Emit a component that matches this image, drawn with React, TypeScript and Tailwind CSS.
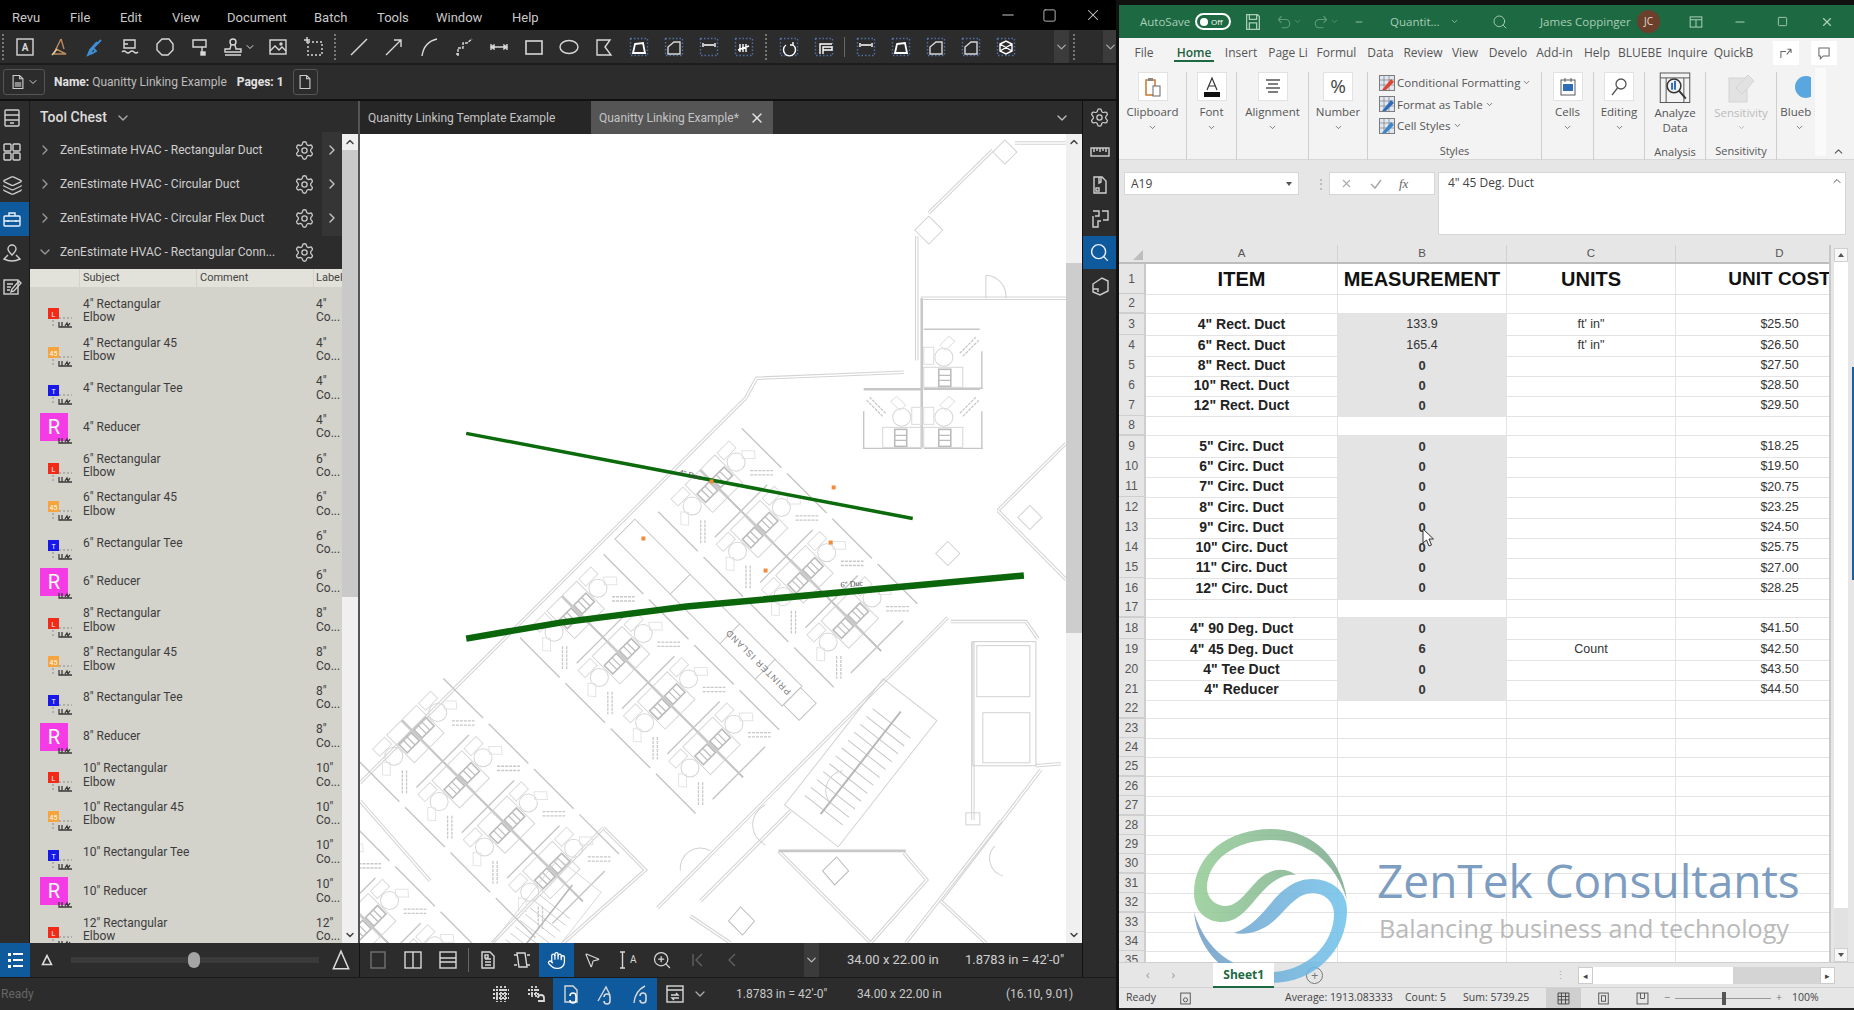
import type { ReactNode } from 'react'
import {
  ChevronDown, ChevronRight, ChevronUp, Hand, Layers, Minus, MousePointer2, Search, Settings, Square, X, ZoomIn,
} from 'lucide-react'

const MENUS = [
  ['Revu', 'w-[58px]'], ['File', 'w-[50px]'], ['Edit', 'w-[52px]'], ['View', 'w-[55px]'], ['Document', 'w-[87px]'],
  ['Batch', 'w-[63px]'], ['Tools', 'w-[59px]'], ['Window', 'w-[76px]'], ['Help', 'w-[40px]'],
]

function Ico({ children, size = 22, className = '' }: { children: ReactNode; size?: number; className?: string }) {
  return (
    <svg width={size} height={size} viewBox="0 0 22 22" fill="none" stroke="currentColor" strokeWidth="1.4" className={className}>
      {children}
    </svg>
  )
}

const Dash = () => <rect x="2.5" y="2.5" width="17" height="17" stroke="#4f6fa8" strokeDasharray="1.5 2" />

// toolbar glyphs, drawn by hand since the packages don't have these
const GLYPH: Record<string, ReactNode> = {
  text: <><rect x="3" y="3" width="16" height="16" /><text x="11" y="15" fontSize="10" fontWeight="700" textAnchor="middle" fill="currentColor" stroke="none" fontFamily="Roboto">A</text></>,
  pen: <><path d="M12 3 L7 13 M12 3 L15 13 M7 13 L17 18 L5 18 Z" stroke="#b98a5e" /><path d="M3 19 L8 13" stroke="#e8c9a8" /></>,
  hi: <path d="M17 4 L9 12 L6 18 L4 19 L6 14 L13 6 M9 12 L12 15 L7 18" stroke="#3f8fd6" strokeWidth="1.8" />,
  cloud: <><path d="M5 4 H16 V12 H5 Z M5 8 H9" /><path d="M3 16 q2 -2 4 0 t4 0 t4 0 t4 0" /></>,
  poly: <path d="M8 3 L15 3 L19 8 L19 14 L14 19 L8 19 L3 14 L3 8 Z" />,
  callout: <><path d="M4 4 H17 V11 H4 Z" /><path d="M13 11 V16" /><rect x="12" y="16" width="4" height="3" fill="currentColor" /></>,
  stamp: <><circle cx="11" cy="6" r="3" /><path d="M9 9 L8 13 H3 V16 H19 V13 H14 L13 9 M3 19 H19" /></>,
  image: <><rect x="3" y="4" width="16" height="14" /><path d="M3 15 L8 10 L12 14 L15 11 L19 15" /><circle cx="14" cy="8" r="1" /></>,
  crop: <><rect x="6" y="6" width="14" height="13" strokeDasharray="2 2" /><path d="M5 1 V7 M2 4 H8" /></>,
  line: <path d="M3 19 L19 3" />,
  arrow: <path d="M3 19 L18 4 M11 4 H18 V11" />,
  arc: <path d="M4 20 Q6 6 19 3" />,
  poly2: <path d="M5 20 V12 H10 V7 H14 L19 3 M3 18 H7" strokeDasharray="3 1" />,
  dim: <path d="M3 11 H19 M3 8 V14 M19 8 V14 M3 11 L6 9 V13 Z M19 11 L16 9 V13 Z" />,
  rect: <rect x="3" y="5" width="16" height="13" strokeWidth="1.6" />,
  ellipse: <ellipse cx="11" cy="11" rx="9" ry="6.5" />,
  sketch: <path d="M4 4 H17 L12 11 L18 19 H4 Z" />,
  len: <><Dash /><path d="M6 9 H16 M5 7 V11 M17 7 V11" stroke="#fff" /></>,
  area: <><Dash /><path d="M7 8 L15 7 L17 17 H5 Z" stroke="#fff" strokeWidth="1.8" /></>,
  peri: <><Dash /><path d="M5 18 V11 L11 6 H17 V18 Z" /></>,
  count: <><Dash /><path d="M7 8 V16 M10 8 V16 M13 8 V16 M5 14 L16 10" stroke="#fff" /></>,
  rot: <><Dash /><path d="M8 9 A6 6 0 1 0 15 9 M15 9 L15 6 M15 9 L12 9" stroke="#fff" /></>,
  pipe: <><Dash /><path d="M7 18 V8 H19 M10 18 V11 H19 V14 H10" stroke="#fff" /></>,
  vol: <><Dash /><path d="M5 8 L11 5 L17 8 V15 L11 18 L5 15 Z M5 8 L17 15 M17 8 L5 15" stroke="#fff" /></>,
  drawer: <><rect x="4" y="3" width="14" height="16" rx="1" /><path d="M4 8 H18 M4 13 H18 M9 16 H13" /></>,
  thumbs: <><rect x="3" y="3" width="7" height="7" rx="1" /><rect x="12" y="3" width="7" height="7" rx="1" /><rect x="3" y="12" width="7" height="7" rx="1" /><rect x="12" y="12" width="7" height="7" rx="1" /></>,
  chest: <><rect x="3" y="8" width="16" height="10" rx="1" /><path d="M8 8 V5 H14 V8 M3 13 H19 M7 12 V14 M15 12 V14" /></>,
  pin: <><path d="M11 13 C7 9 7 8 7 7 A4 4 0 0 1 15 7 C15 8 15 9 11 13 Z" /><path d="M7 13 L3 17 Q11 21 19 17 L15 13" /></>,
  form: <><rect x="3" y="5" width="14" height="14" /><path d="M6 9 H12 M6 12 H10 M6 15 H9 M18 6 L11 14 L10 17 L13 16 L20 8 Z" /></>,
  ruler: <><rect x="2" y="7" width="18" height="8" /><path d="M5 7 V11 M8 7 V10 M11 7 V11 M14 7 V10 M17 7 V11" /></>,
  doc: <><path d="M5 3 H13 L17 7 V19 H5 Z" /><path d="M10 3 V9 L12 8 V3" /><rect x="7" y="14" width="3" height="3" /></>,
  plan: <path d="M4 3 H10 V8 H6 M13 3 H19 V12 H14 M4 8 V19 H9 V13 H12" />,
  shape: <path d="M4 9 L13 3 L19 6 V16 L11 20 L4 17 Z M4 14 H9 V17" />,
  page: <><path d="M5 3 H13 L17 7 V19 H5 Z M13 3 V7 H17" /><rect x="7" y="11" width="8" height="6" fill="currentColor" stroke="none" opacity="0.6" /></>,
  single: <rect x="4" y="3" width="14" height="16" />,
  split: <><rect x="3" y="3" width="16" height="16" /><path d="M11 3 V19" /></>,
  splitH: <><rect x="3" y="3" width="16" height="16" /><path d="M3 9 H19 M3 13 H19" /></>,
  pageText: <><path d="M5 3 H13 L17 7 V19 H5 Z" /><path d="M8 10 H14 M8 13 H14 M8 16 H14" /><rect x="8" y="6" width="3" height="3" /></>,
  pageCrop: <><path d="M3 6 H6 M3 16 H6 M16 6 H19 M16 16 H19" /><path d="M6 4 H14 L16 18 H8 Z" /></>,
  textSel: <><path d="M4 3 H9 M4 19 H9 M6.5 3 V19" /><text x="14" y="14" fontSize="10" fill="currentColor" stroke="none" fontFamily="Roboto">A</text></>,
  first: <path d="M7 5 V17 M16 5 L10 11 L16 17" />,
  prev: <path d="M14 5 L8 11 L14 17" />,
  grid: <path d="M7 3 V19 M11 3 V19 M15 3 V19 M3 7 H19 M3 11 H19 M3 15 H19" strokeDasharray="2 1" strokeWidth="1.8" />,
  gridSnap: <><path d="M7 3 V15 M11 3 V15 M3 7 H15 M3 11 H15" strokeDasharray="2 1" strokeWidth="1.8" /><path d="M13 15 a3 3 0 0 1 6 0 v3 h-6" strokeWidth="1.8" /></>,
  snapDoc: <><path d="M5 3 H13 L17 7 V19 H5 Z" /><path d="M10 13 a3 3 0 0 1 6 0 v4 a3 3 0 0 1 -6 0" stroke="#fff" strokeWidth="1.6" /></>,
  snapMark: <><path d="M3 18 L11 4 L15 12" /><path d="M9 14 a3 3 0 0 1 6 0 v4 a3 3 0 0 1 -6 0" strokeWidth="1.6" /></>,
  snapLine: <><path d="M5 20 Q6 8 16 3" /><path d="M11 13 a3 3 0 0 1 6 0 v4 a3 3 0 0 1 -6 0" strokeWidth="1.6" /></>,
  sync: <><rect x="3" y="3" width="16" height="16" /><path d="M3 7 H19 M7 12 H14 L12 10 M15 15 H8 L10 17" /></>,
}

function ToolBtn({ name, className = 'w-[35px]' }: { name: string; className?: string }) {
  return (
    <div className={`${className} h-full flex items-center justify-center text-[#d8d8d8] shrink-0`}>
      <Ico>{GLYPH[name]}</Ico>
    </div>
  )
}

const Dotted = ({ className = '' }: { className?: string }) => (
  <div className={`h-[26px] border-l-2 border-dotted border-[#777] shrink-0 ${className}`} />
)

function MainToolbar() {
  const first = ['pen', 'hi', 'cloud', 'poly', 'callout']
  const second = ['line', 'arrow', 'arc', 'poly2', 'dim', 'rect', 'ellipse', 'sketch', 'area', 'peri', 'len', 'count']
  const fourth = ['len', 'area', 'peri', 'peri', 'vol']
  return (
    <div className="h-[33px] bg-[#2c2c2c] flex items-center shrink-0">
      <Dotted className="ml-[2px] mr-[3px]" />
      <ToolBtn name="text" />
      {first.map((n, i) => <ToolBtn key={i} name={n} />)}
      <div className="w-[43px] h-full flex items-center justify-center text-[#d8d8d8] shrink-0">
        <Ico>{GLYPH.stamp}</Ico>
        <ChevronDown className="w-3 h-3" />
      </div>
      <ToolBtn name="image" />
      <ToolBtn name="crop" />
      <Dotted className="ml-[4px] mr-[5px]" />
      {second.map((n, i) => <ToolBtn key={i} name={n} />)}
      <Dotted className="ml-[4px] mr-[4px]" />
      <ToolBtn name="rot" />
      <ToolBtn name="pipe" />
      <div className="h-[20px] border-l border-[#666] mx-[3px] shrink-0" />
      {fourth.map((n, i) => <ToolBtn key={i} name={n} />)}
      <div className="ml-[31px] w-[15px] h-full bg-[#3b3b3b] flex items-center justify-center shrink-0">
        <ChevronDown className="w-4 h-4 text-[#aaa]" />
      </div>
      <Dotted className="ml-[4px]" />
      <div className="ml-[28px] w-[15px] h-full bg-[#3b3b3b] flex items-center justify-center shrink-0">
        <ChevronDown className="w-4 h-4 text-[#aaa]" />
      </div>
    </div>
  )
}

const CHESTS = [
  'ZenEstimate HVAC - Rectangular Duct',
  'ZenEstimate HVAC - Circular Duct',
  'ZenEstimate HVAC - Circular Flex Duct',
  'ZenEstimate HVAC - Rectangular Conn...',
]

type RowKind = 'elbow' | 'elbow45' | 'tee' | 'reducer'

const SIZES = ['4"', '6"', '8"', '10"', '12"']
const KINDS: [RowKind, string][] = [
  ['elbow', 'Rectangular\nElbow'],
  ['elbow45', 'Rectangular 45\nElbow'],
  ['tee', 'Rectangular Tee'],
  ['reducer', 'Reducer'],
]
const CHEST_ROWS = SIZES.flatMap(s =>
  KINDS.map(([kind, label]) => ({ size: s, kind, label: `${s} ${label}` }))
).slice(0, 17)

function RowIcon({ kind }: { kind: RowKind }) {
  const fill = kind === 'elbow' ? '#f32a17' : kind === 'elbow45' ? '#f8a43c' : '#1818ea'
  const letter = kind === 'elbow' ? 'L' : kind === 'tee' ? 'T' : '45'
  return (
    <svg width="34" height="38" viewBox="0 0 34 38" className="block">
      {kind === 'reducer' ? (
        <>
          <rect x="0" y="5" width="28" height="28" fill="#f53be6" />
          <text x="14" y="26" fontSize="20" fill="#fff" textAnchor="middle" fontFamily="Roboto">R</text>
        </>
      ) : (
        <>
          <rect x="8" y="16" width="11" height="11" fill={fill} />
          <text x="13.5" y="24.5" fontSize="7" fill="#fff" textAnchor="middle" fontFamily="Roboto">{letter}</text>
          <path d="M19 26 H32 M13 28 V36" stroke="#8a8a8a" strokeDasharray="2 2" fill="none" />
        </>
      )}
      <path d="M19 30 V35 H32 M22 30 V35 M25 34 L27 31 L28 34 L30 31" stroke="#3a3a3a" strokeWidth="1.3" fill="none" />
    </svg>
  )
}

function ToolChest() {
  return (
    <div className="w-[312px] bg-[#2c2c2c] flex flex-col shrink-0 overflow-hidden">
      <div className="h-[33px] flex items-center gap-2 pl-[10px] text-[14px] font-medium text-[#dedede] shrink-0">
        Tool Chest <ChevronDown className="w-4 h-4 text-[#aaa]" />
      </div>
      {CHESTS.map((name, i) => (
        <div key={name} className="h-[36px] -mt-[2px] first:mt-0 flex items-center shrink-0 relative">
          <div className="w-[30px] flex justify-center text-[#999]">
            {i === 3 ? <ChevronDown className="w-4 h-4" /> : <ChevronRight className="w-4 h-4" />}
          </div>
          <span className="text-[12px] text-[#cfcfcf] w-[234px] truncate">{name}</span>
          <Settings className="w-[21px] h-[21px] text-[#c9c9c9]" strokeWidth={1.5} />
          {i < 3 && (
            <div className="absolute right-0 top-0 h-full w-[20px] bg-[#353535] flex items-center justify-center text-[#c5c5c5]">
              <ChevronRight className="w-4 h-4" />
            </div>
          )}
        </div>
      ))}
      <div className="flex-1 min-h-0 bg-[#d3d2cb] overflow-hidden -mt-[1px]">
        <div className="h-[18px] bg-[#e2e1da] grid grid-cols-[50px_117px_117px_28px] text-[11px] text-[#444] leading-[18px]">
          <span className="border-r border-[#d3d2cb]" />
          <span className="pl-[3px] border-r border-[#d3d2cb]">Subject</span>
          <span className="pl-[3px] border-r border-[#d3d2cb]">Comment</span>
          <span className="pl-[2px] overflow-hidden">Label</span>
        </div>
        <div className="pt-[5px]">
          {CHEST_ROWS.map(row => (
            <div key={row.label} className="h-[38.7px] grid grid-cols-[50px_117px_117px_28px] items-center text-[12px] leading-[13.5px] text-[#3c3c3c]">
              <div className="pl-[10px] self-start"><RowIcon kind={row.kind} /></div>
              <div className="pl-[3px] whitespace-pre">{row.label}</div>
              <div />
              <div className="pl-[2px] overflow-hidden whitespace-nowrap">{row.size}<br />Co...</div>
            </div>
          ))}
        </div>
      </div>
    </div>
  )
}

const LEFT_RAIL = ['drawer', 'thumbs', 'layers', 'chest', 'pin', 'form']
const RIGHT_RAIL = ['gear', 'ruler', 'doc', 'plan', 'search', 'shape']

function RailItem({ name, active, inset }: { name: string; active?: boolean; inset?: boolean }) {
  return (
    <div className={`h-[33.7px] flex items-center justify-center text-[#cfcfcf] ${inset ? 'pr-[5px]' : ''} ${active ? 'bg-[#0f5a9c] text-[#e8f1fb]' : ''}`}>
      {name === 'layers' ? <Layers className="w-[21px] h-[21px]" strokeWidth={1.4} />
        : name === 'gear' ? <Settings className="w-[21px] h-[21px]" strokeWidth={1.4} />
        : name === 'search' ? <Search className="w-[21px] h-[21px]" strokeWidth={1.6} />
        : <Ico>{GLYPH[name]}</Ico>}
    </div>
  )
}

const Cube = ({ t }: { t: string }) => (
  <g transform={t}>
    <path d="M0 0 H56 M58 22 V59 M0 59 H59" strokeWidth="1.4" stroke="#c6c6c6" />
    <circle cx="20" cy="28" r="9" stroke="#d6d6d6" />
    <rect x="0" y="38" width="39" height="20" stroke="#d6d6d6" />
    <rect x="15" y="40" width="12" height="17" stroke="#bcbcbc" strokeWidth="1.6" />
    <path d="M15 46 H27 M15 51 H27" stroke="#bcbcbc" strokeWidth="1.2" />
    <rect x="0" y="18" width="10" height="17" stroke="#dcdcdc" />
    <path d="M16 16 L25 7 L31 12 L22 21 Z" stroke="#e4e4e4" />
    <path d="M36 24 L52 8 M39 27 L55 11" strokeDasharray="3 1" stroke="#c8c8c8" strokeWidth="1.3" />
  </g>
)

function Pod({ x, y, n = 4 }: { x: number; y: number; n?: number }) {
  const cells = Array.from({ length: n }, (_, i) => i * 64 - (n * 64) / 2)
  return (
    <g transform={`translate(${x} ${y}) rotate(45)`}>
      <path d={`M${cells[0]} 0 H${-cells[0]}`} stroke="#bcbcbc" strokeWidth="1.8" />
      {cells.map(c => (
        <g key={c}>
          <Cube t={`translate(${c} -59)`} />
          <Cube t={`translate(${c} 59) scale(1 -1)`} />
        </g>
      ))}
    </g>
  )
}

const Stairs = ({ t, n = 12 }: { t: string; n?: number }) => (
  <g transform={t}>
    <rect x="-80" y="-34" width="160" height="68" />
    {Array.from({ length: n }, (_, i) => (
      <path key={i} d={`M${-60 + i * 10} -24 V24`} stroke="#c6c6c6" />
    ))}
    <path d="M-65 0 H65" stroke="#b8b8b8" strokeWidth="2" />
  </g>
)

const WALLS = [
  'M360 782 L745 398', 'M745 398 L756 378 L903 372',
  'M916 236 V360', 'M928 213 L992 150', 'M1014 143 H1065', 'M920 298 H1065',
  'M997 510 L1065 443', 'M997 510 L1065 579',
  'M947 617 L657 907', 'M950 621 H1025 L1037 638', 'M1040 769 L940 900',
  'M778 850 L870 942', 'M903 852 L926 879 L870 942',
  'M603 827 L645 869 L563 942', 'M603 827 L492 942', 'M360 800 L430 880',
  'M972 641 V819', 'M1000 820 L905 942', 'M1035 765 L1060 763',
  'M700 900 L790 810', 'M690 915 L730 942', 'M940 900 L985 942',
]

function FloorPlan() {
  return (
    <svg viewBox="360 134 705 808" className="w-full h-full block" fill="none" stroke="#d2d2d2" strokeWidth="1">
      {WALLS.map(d => (
        <g key={d}>
          <path d={d} strokeWidth="3.5" stroke="#d4d4d4" />
          <path d={d} strokeWidth="1.4" stroke="#fff" />
        </g>
      ))}
      <path d="M921 298 V447 M921 389 H863 M778 850 H905" stroke="#c8c8c8" strokeWidth="2.6" />
      <path d="M985 275 V298 M985 275 A21 21 0 0 1 1005 298" />
      <path d="M914 230 l14 -14 l14 14 l-14 14 Z M992 152 l12 -12 l12 12 l-12 12 Z M1029 505 l12 12 l-12 12 l-12 -12 Z M947 541 l12 12 l-12 12 l-12 -12 Z" />
      <Cube t="translate(923 329)" />
      <Cube t="translate(923 389)" />
      <Cube t="translate(921 389) scale(-1 1)" />
      <Pod x={790} y={560} />
      <Pod x={652} y={686} />
      <Pod x={492} y={810} />
      <Pod x={376} y={930} n={3} />
      <g transform="translate(708 612) rotate(45)">
        <rect x="-118" y="-14" width="236" height="28" stroke="#c4c4c4" fill="#fff" />
        <path d="M-40 -14 V14 M30 -14 V14 M80 -14 V14" stroke="#c4c4c4" />
        <rect x="118" y="-12" width="22" height="24" stroke="#c4c4c4" />
        <text x="70" y="3" transform="rotate(180 70 0)" fontSize="9" fill="#7a7a7a" stroke="none" textAnchor="middle" letterSpacing="1" fontFamily="Liberation Sans">PRINTER ISLAND</text>
      </g>
      <rect x="976" y="645" width="53" height="51" />
      <rect x="982" y="712" width="47" height="50" />
      <rect x="972" y="641" width="63" height="124" stroke="#cdcdcd" />
      <rect x="965" y="812" width="14" height="12" />
      <Stairs t="translate(860 762) rotate(-52)" />
      <Stairs t="translate(540 925) rotate(-52) scale(0.8)" n={10} />
      <path d="M765 844 a22 22 0 0 1 0 -40 M828 800 a20 20 0 0 1 14 -30 M680 870 a20 20 0 0 1 30 -20 M1002 875 a18 18 0 0 1 -8 -30" />
      <path d="M728 920 l12 -14 l14 14 l-12 14 Z M822 870 l14 -14 l12 14 l-14 14 Z" stroke="#bdbdbd" />

      <path d="M466 433 L912 518" stroke="#0b6a0b" strokeWidth="3.5" />
      <path d="M466 638 L560 622 L686 606 L1023 575" stroke="#0b650b" strokeWidth="6.5" />
      <text x="678" y="474" fontSize="8" fill="#444" stroke="none" fontFamily="Liberation Serif" transform="rotate(14 678 474)">4" Duc</text>
      <text x="840" y="587" fontSize="8" fill="#444" stroke="none" fontFamily="Liberation Serif" transform="rotate(-5 840 587)">6" Duc</text>
      {[[711, 481], [833, 487], [643, 538], [830, 542], [765, 570]].map(([x, y]) => (
        <rect key={x} x={x - 2} y={y - 2} width="4" height="4" fill="#f28b3c" stroke="none" />
      ))}
    </svg>
  )
}

function CanvasColumn() {
  return (
    <div className="flex-1 min-w-0 flex flex-col">
      <div className="h-[33px] flex text-[12px] text-[#c4c4c4] bg-[#2c2c2c] shrink-0">
        <div className="w-[231px] pl-[8px] flex items-center bg-[#262626]">Quanitty Linking Template Example</div>
        <div className="w-[182px] pl-[8px] flex items-center justify-between pr-[8px] bg-[#555]">
          Quanitty Linking Example*
          <X className="w-4 h-4 text-[#e6e6e6]" />
        </div>
        <div className="flex-1 flex items-center justify-end pr-[12px]"><ChevronDown className="w-4 h-4 text-[#bbb]" /></div>
      </div>
      <div className="flex-1 min-h-0 flex">
        <div className="flex-1 min-w-0 bg-white overflow-hidden"><FloorPlan /></div>
        <div className="w-[16px] flex flex-col bg-[#f0f0f0] shrink-0">
          <div className="h-[16px] flex items-center justify-center"><ChevronUp className="w-3 h-3 text-[#444]" strokeWidth={3} /></div>
          <div className="h-[113px]" />
          <div className="h-[370px] bg-[#cdcdcd]" />
          <div className="flex-1" />
          <div className="h-[16px] flex items-center justify-center"><ChevronDown className="w-3 h-3 text-[#444]" strokeWidth={3} /></div>
        </div>
      </div>
    </div>
  )
}

function BottomBar() {
  return (
    <div className="h-[34px] bg-[#2c2c2c] flex items-center shrink-0 text-[13px] text-[#cfcfcf]">
      <div className="w-[30px] h-full bg-[#0f5a9c] flex flex-col items-center justify-center gap-[3px]">
        {[0, 1, 2].map(i => (
          <div key={i} className="flex gap-[2px] items-center">
            <div className="w-[3px] h-[3px] bg-white" /><div className="w-[10px] h-[2px] bg-white" />
          </div>
        ))}
      </div>
      <div className="w-[330px] h-full flex items-center border-r border-[#111] shrink-0">
        <Ico size={14} className="ml-[10px] text-[#ddd] shrink-0"><path d="M11 4 L18 18 H4 Z" strokeWidth="2.5" /></Ico>
        <div className="ml-[17px] w-[248px] h-[6px] bg-[#3a3a3a] relative shrink-0">
          <div className="absolute left-[117px] -top-[5px] w-[12px] h-[16px] rounded-full bg-[#a5a5a5]" />
        </div>
        <Ico size={24} className="ml-[10px] text-[#ddd] shrink-0"><path d="M11 3 L18 19 H4 Z" /></Ico>
      </div>
      <ToolBtn name="single" className="w-[35px] opacity-40" />
      <ToolBtn name="split" />
      <ToolBtn name="splitH" />
      <div className="h-[24px] border-l border-[#666] mx-[3px] shrink-0" />
      <ToolBtn name="pageText" className="w-[32px]" />
      <ToolBtn name="pageCrop" />
      <div className="w-[35px] h-full bg-[#0f5a9c] flex items-center justify-center text-white shrink-0">
        <Hand className="w-[19px] h-[19px]" strokeWidth={1.6} />
      </div>
      <div className="w-[35px] flex justify-center text-[#d8d8d8]"><MousePointer2 className="w-[18px] h-[18px]" strokeWidth={1.5} /></div>
      <ToolBtn name="textSel" />
      <div className="w-[35px] flex justify-center text-[#d8d8d8]"><ZoomIn className="w-[20px] h-[20px]" strokeWidth={1.5} /></div>
      <ToolBtn name="first" className="w-[35px] opacity-30" />
      <ToolBtn name="prev" className="w-[35px] opacity-30" />
      <div className="ml-[55px] w-[15px] h-full bg-[#3b3b3b] flex items-center justify-center shrink-0">
        <ChevronDown className="w-4 h-4 text-[#bbb]" />
      </div>
      <span className="ml-[28px] w-[118px] shrink-0">34.00 x 22.00 in</span>
      <span className="shrink-0">1.8783 in = 42'-0"</span>
    </div>
  )
}

function StatusBar() {
  return (
    <div className="h-[33px] bg-[#2c2c2c] flex items-center shrink-0 text-[12px] text-[#c8c8c8] border-t border-[#1a1a1a]">
      <span className="w-[483px] text-[#666] shrink-0 pl-[1px]">Ready</span>
      <ToolBtn name="grid" />
      <ToolBtn name="gridSnap" />
      <div className="h-full bg-[#0f5a9c] flex items-center shrink-0">
        <ToolBtn name="snapDoc" className="w-[35px]" />
        <ToolBtn name="snapMark" className="w-[35px]" />
        <ToolBtn name="snapLine" className="w-[34px]" />
      </div>
      <ToolBtn name="sync" />
      <ChevronDown className="w-4 h-4 text-[#aaa] shrink-0" />
      <span className="ml-[28px] w-[121px] shrink-0">1.8783 in = 42'-0"</span>
      <span className="w-[149px] shrink-0">34.00 x 22.00 in</span>
      <span className="shrink-0">(16.10, 9.01)</span>
    </div>
  )
}

function RevuWindow() {
  return (
    <div className="w-[1116px] h-full flex flex-col shrink-0 font-[Roboto,sans-serif]">
      <div className="h-[30px] bg-black flex items-center pl-[12px] text-[13px] text-[#c9c9c9] shrink-0">
        {MENUS.map(([label, width]) => <span key={label} className={`${width} pt-[6px]`}>{label}</span>)}
        <div className="ml-auto flex items-center text-[#c9c9c9]">
          <Minus className="w-[18px] h-[18px] mr-[25px]" strokeWidth={1.4} />
          <Square className="w-[15px] h-[15px] mr-[27px]" strokeWidth={1.4} />
          <X className="w-[18px] h-[18px] mr-[14px]" strokeWidth={1.4} />
        </div>
      </div>
      <MainToolbar />
      <div className="h-[2px] bg-[#1c1c1c] shrink-0" />
      <div className="h-[34px] bg-[#2c2c2c] flex items-center text-[12px] text-[#bdbdbd] shrink-0">
        <div className="ml-[3px] w-[42px] h-[26px] border border-[#555] rounded-[3px] flex items-center justify-center text-[#ccc]">
          <Ico size={18}>{GLYPH.page}</Ico><ChevronDown className="w-3 h-3" />
        </div>
        <span className="ml-[9px]"><span className="font-bold text-[#e2e2e2]">Name:</span> Quanitty Linking Example</span>
        <span className="ml-[10px] font-bold text-[#e2e2e2]">Pages: 1</span>
        <div className="ml-[9px] w-[25px] h-[26px] border border-[#555] rounded-[3px] flex items-center justify-center text-[#ccc]">
          <Ico size={18}><path d="M5 3 H13 L17 7 V19 H5 Z M13 3 V7 H17" /></Ico>
        </div>
      </div>
      <div className="h-[2px] bg-[#111] shrink-0" />
      <div className="flex-1 min-h-0 flex">
        <div className="flex-1 min-w-0 flex flex-col">
          <div className="flex-1 min-h-0 flex">
            <div className="w-[30px] pt-0 bg-[#2c2c2c] shrink-0 border-r border-[#1a1a1a]">
              {LEFT_RAIL.map(n => <RailItem key={n} name={n} active={n === 'chest'} inset />)}
            </div>
            <ToolChest />
            <div className="w-[16px] bg-[#f0f0f0] flex flex-col shrink-0">
              <div className="h-[33px] bg-[#2c2c2c]" />
              <div className="h-[16px] bg-[#efefef] flex items-center justify-center"><ChevronUp className="w-3 h-3 text-[#444]" strokeWidth={3} /></div>
              <div className="h-[447px] bg-[#c9c9c9]" />
              <div className="flex-1" />
              <div className="h-[16px] flex items-center justify-center"><ChevronDown className="w-3 h-3 text-[#444]" strokeWidth={3} /></div>
            </div>
            <div className="w-[2px] bg-[#555] shrink-0" />
            <CanvasColumn />
          </div>
          <BottomBar />
        </div>
        <div className="w-[34px] bg-[#2c2c2c] shrink-0 border-l border-[#111]">
          {RIGHT_RAIL.map(n => <RailItem key={n} name={n} active={n === 'search'} />)}
        </div>
      </div>
      <StatusBar />
    </div>
  )
}

const RIBBON_TABS = [
  ['File', 'w-[50px]'], ['Home', 'w-[50px]'], ['Insert', 'w-[44px]'], ['Page Li', 'w-[50px]'], ['Formul', 'w-[47px]'],
  ['Data', 'w-[41px]'], ['Review', 'w-[44px]'], ['View', 'w-[40px]'], ['Develo', 'w-[46px]'], ['Add-in', 'w-[47px]'],
  ['Help', 'w-[38px]'], ['BLUEBE', 'w-[48px]'], ['Inquire', 'w-[47px]'], ['QuickB', 'w-[45px]'],
]

function RibbonBtn({ label, children, width, dim }: { label: string; children: ReactNode; width: string; dim?: boolean }) {
  return (
    <div className={`${width} h-[88px] border-r border-[#cfcfcf] flex flex-col items-center shrink-0 ${dim ? 'opacity-40' : ''}`}>
      <div className="w-[30px] h-[29px] bg-white border border-[#e2e2e2] flex items-center justify-center text-[#444]">{children}</div>
      <span className="mt-[3px] leading-[16px]">{label}</span>
      <ChevronDown className="w-[9px] h-[9px] mt-[3px] text-[#555]" />
    </div>
  )
}

const StyleIcon = ({ color }: { color: string }) => (
  <svg width="16" height="16" viewBox="0 0 16 16" className="shrink-0">
    <rect x="0.5" y="0.5" width="15" height="15" fill="#dfe8f2" stroke="#7d7d7d" />
    <path d="M0 5 H16 M0 10 H16 M5 0 V16 M10 0 V16" stroke="#7d7d7d" strokeWidth="0.7" />
    <path d="M3 15 L12 4 L15 7 L7 15 Z" fill={color} />
  </svg>
)

function Ribbon() {
  return (
    <div className="h-[92px] bg-[#f3f3f3] flex pt-[4px] text-[11.5px] text-[#555] shrink-0 border-b border-[#d8d8d8] relative">
      <RibbonBtn label="Clipboard" width="w-[68px]">
        <svg width="18" height="22" viewBox="0 0 18 22" fill="none"><rect x="2" y="4" width="9" height="15" stroke="#c9772d" strokeWidth="1.5" /><rect x="9" y="10" width="7" height="10" stroke="#666" fill="#fff" /><rect x="4" y="2" width="5" height="3" fill="#888" /></svg>
      </RibbonBtn>
      <RibbonBtn label="Font" width="w-[50px]">
        <svg width="18" height="22" viewBox="0 0 18 22" fill="none"><path d="M4 14 L9 2 L14 14 M6 10 H12" stroke="#333" strokeWidth="1.2" /><rect x="1" y="16" width="16" height="5" fill="#111" /></svg>
      </RibbonBtn>
      <RibbonBtn label="Alignment" width="w-[72px]">
        <svg width="18" height="18" viewBox="0 0 18 18" stroke="#555" strokeWidth="1.4"><path d="M2 2 H16 M4 6 H14 M2 10 H16 M4 14 H14" /></svg>
      </RibbonBtn>
      <RibbonBtn label="Number" width="w-[59px]">
        <span className="text-[19px] text-[#444]">%</span>
      </RibbonBtn>
      <div className="w-[174px] h-[88px] border-r border-[#cfcfcf] pl-[11px] flex flex-col shrink-0 relative">
        <div className="h-[22px] flex items-center gap-[2px]"><StyleIcon color="#e0452f" /> Conditional Formatting <ChevronDown className="w-[9px] h-[9px]" /></div>
        <div className="h-[23px] flex items-center gap-[2px]"><StyleIcon color="#2f6db8" /> Format as Table <ChevronDown className="w-[9px] h-[9px]" /></div>
        <div className="h-[22px] flex items-center gap-[2px]"><StyleIcon color="#3a86c8" /> Cell Styles <ChevronDown className="w-[9px] h-[9px]" /></div>
        <span className="mt-[7px] text-center pr-[11px] text-[11px]">Styles</span>
      </div>
      <RibbonBtn label="Cells" width="w-[52px]">
        <svg width="18" height="20" viewBox="0 0 18 20" fill="none"><rect x="2" y="3" width="14" height="15" stroke="#5b5b5b" /><rect x="4" y="7" width="10" height="7" fill="#2f6db8" /><path d="M6 1 V5 M12 1 V5" stroke="#5b5b5b" /></svg>
      </RibbonBtn>
      <RibbonBtn label="Editing" width="w-[51px]">
        <svg width="20" height="20" viewBox="0 0 20 20" fill="none" stroke="#555" strokeWidth="1.3"><circle cx="12" cy="7" r="5" /><path d="M8.5 11 L3 18" /></svg>
      </RibbonBtn>
      <div className="w-[61px] h-[88px] border-r border-[#cfcfcf] flex flex-col items-center shrink-0">
        <svg width="32" height="32" viewBox="0 0 32 32" fill="none" stroke="#555"><rect x="1" y="1" width="30" height="30" /><path d="M1 6 H31 M7 6 V31 M25 6 V31" /><circle cx="15" cy="14" r="7" stroke="#333" strokeWidth="1.5" /><rect x="12" y="11" width="2" height="7" fill="#2f6db8" stroke="none" /><rect x="15" y="9" width="2" height="9" fill="#2f6db8" stroke="none" /><path d="M20 19 L27 27" stroke="#333" strokeWidth="2" /></svg>
        <span className="leading-[15px] text-center mt-[1px]">Analyze<br />Data</span>
        <span className="mt-[9px] text-[11px]">Analysis</span>
      </div>
      <div className="w-[71px] h-[88px] border-r border-[#cfcfcf] flex flex-col items-center shrink-0">
        <svg width="30" height="32" viewBox="0 0 30 32" fill="#e2e2e2" stroke="#d4d4d4"><rect x="3" y="6" width="18" height="24" /><path d="M10 16 L22 3 L28 9 L16 22 Z" /></svg>
        <span className="leading-[15px] mt-[1px] text-[#bbb]">Sensitivity</span>
        <ChevronDown className="w-[9px] h-[9px] mt-[3px] text-[#aaa]" />
        <span className="mt-[11px] text-[11px]">Sensitivity</span>
      </div>
      <div className="w-[40px] flex flex-col items-center shrink-0 pl-[4px] overflow-hidden">
        <div className="w-[24px] h-[29px] flex items-center overflow-hidden"><div className="w-[22px] h-[22px] rounded-full bg-[#5aa7e0] ml-[8px] shrink-0" /></div>
        <span className="mt-[3px] leading-[16px] whitespace-nowrap">Blueb ›</span>
        <ChevronDown className="w-[9px] h-[9px] mt-[3px]" />
      </div>
      <div className="w-[11px] h-[88px] bg-[#fafafa] shrink-0 -mt-[4px] ml-[-2px]" />
      <ChevronUp className="absolute right-[9px] bottom-[1px] w-[13px] h-[13px]" />
    </div>
  )
}

const ROWS: Record<number, [string, string, string, string]> = {
  3: ['4" Rect. Duct', '133.9', `ft' in"`, '$25.50'],
  4: ['6" Rect. Duct', '165.4', `ft' in"`, '$26.50'],
  5: ['8" Rect. Duct', '0', '', '$27.50'],
  6: ['10" Rect. Duct', '0', '', '$28.50'],
  7: ['12" Rect. Duct', '0', '', '$29.50'],
  9: ['5" Circ. Duct', '0', '', '$18.25'],
  10: ['6" Circ. Duct', '0', '', '$19.50'],
  11: ['7" Circ. Duct', '0', '', '$20.75'],
  12: ['8" Circ. Duct', '0', '', '$23.25'],
  13: ['9" Circ. Duct', '0', '', '$24.50'],
  14: ['10" Circ. Duct', '0', '', '$25.75'],
  15: ['11" Circ. Duct', '0', '', '$27.00'],
  16: ['12" Circ. Duct', '0', '', '$28.25'],
  18: ['4" 90 Deg. Duct', '0', '', '$41.50'],
  19: ['4" 45 Deg. Duct', '6', 'Count', '$42.50'],
  20: ['4" Tee Duct', '0', '', '$43.50'],
  21: ['4" Reducer', '0', '', '$44.50'],
}

const GRID_COLS = 'grid grid-cols-[27px_192px_169px_169px_208px]'
const CELL = 'border-r border-b border-[#e3e3e3] flex items-center justify-center'

function Sheet() {
  const numbers = Array.from({ length: 34 }, (_, i) => i + 2)
  return (
    <div className="flex-1 min-h-0 flex bg-[#e6e6e6]">
      <div className="w-[712px] overflow-hidden border-r-2 border-[#c8c8c8] font-['Liberation_Sans',sans-serif]">
        <div className={`${GRID_COLS} h-[19px] text-[11.5px] text-[#555] border-b-2 border-[#bdbdbd]`}>
          <div className="flex items-end justify-end pr-[3px] pb-[2px]">
            <div className="w-0 h-0 border-l-[10px] border-l-transparent border-b-[10px] border-b-[#bdbdbd]" />
          </div>
          {['A', 'B', 'C', 'D'].map(c => (
            <div key={c} className="flex items-center justify-center border-r border-[#d2d2d2]">{c}</div>
          ))}
        </div>
        <div className={`${GRID_COLS} h-[30px] bg-white text-[20px] font-bold text-[#111]`}>
          <div className="bg-[#e6e6e6] text-[12px] font-normal text-[#555] flex items-center justify-center border-r-2 border-b-2 border-[#c8c8c8]">1</div>
          {['ITEM', 'MEASUREMENT', 'UNITS'].map(h => (
            <div key={h} className={`${CELL} whitespace-nowrap`}>{h}</div>
          ))}
          <div className={`${CELL} whitespace-nowrap text-[19px]`}>UNIT COST</div>
        </div>
        {numbers.map(n => {
          const row = ROWS[n]
          return (
            <div key={n} className={`${GRID_COLS} ${n < 22 ? 'h-[20.28px]' : 'h-[19.4px]'} bg-white text-[#333] text-[12.5px]`}>
              <div className="bg-[#e6e6e6] text-[12px] text-[#555] flex items-center justify-center border-r-2 border-b-2 border-[#cfcfcf]">{n}</div>
              <div className={`${CELL} font-bold text-[14px] text-[#222]`}>{row?.[0]}</div>
              <div className={`${CELL} ${row ? 'bg-[#e4e4e4] border-[#e4e4e4]' : ''} ${row?.[1] === '0' || row?.[1] === '6' ? 'font-bold text-[13px]' : ''}`}>{row?.[1]}</div>
              <div className={CELL}>{row?.[2]}</div>
              <div className={CELL}>{row?.[3]}</div>
            </div>
          )
        })}
      </div>
      <div className="w-[3px] shrink-0" />
      <div className="w-[14px] bg-white flex flex-col shrink-0 mt-[3px] relative">
        <div className="h-[14px] bg-[#f7f7f7] border border-[#d0d0d0] flex items-center justify-center">
          <div className="w-0 h-0 border-l-[3px] border-l-transparent border-r-[3px] border-r-transparent border-b-[4px] border-b-[#555]" />
        </div>
        <div className="flex-1" />
        <div className="h-[40px] bg-[#e2e2e2]" />
        <div className="h-[14px] bg-[#f7f7f7] border border-[#d0d0d0] flex items-center justify-center">
          <div className="w-0 h-0 border-l-[3px] border-l-transparent border-r-[3px] border-r-transparent border-t-[4px] border-t-[#555]" />
        </div>
      </div>
      <div className="flex-1 flex flex-col items-end">
        <div className="h-[122px]" />
        <div className="w-[2px] h-[213px] bg-[#1d5f99]" />
      </div>
    </div>
  )
}

function ZenTekLogo() {
  return (
    <>
      <svg viewBox="1190 825 161 162" className="absolute left-[71px] top-[825px] w-[161px] h-[162px] pointer-events-none opacity-85">
        <defs>
          <linearGradient id="zenGreen" x1="0" x2="1" y1="0" y2="0">
            <stop offset="0" stopColor="#93cc95" />
            <stop offset="1" stopColor="#7aa88c" />
          </linearGradient>
          <linearGradient id="zenBlue" x1="0" x2="1" y1="0" y2="0">
            <stop offset="0" stopColor="#6f9cc6" />
            <stop offset="1" stopColor="#6fc2ec" />
          </linearGradient>
        </defs>
        <path fill="url(#zenGreen)" d="M1347 900 C1340 850 1305 829 1271 829 C1228 829 1194 855 1194 893 C1194 912 1207 922 1222 922 C1240 922 1250 905 1262 892 C1272 881 1284 873 1296 875 C1285 867 1270 868 1258 880 C1248 890 1238 906 1226 906 C1215 906 1207 898 1207 888 C1207 860 1236 840 1271 840 C1305 840 1335 860 1347 900 Z" />
        <path fill="url(#zenBlue)" d="M1194 912 C1198 955 1232 983 1271 983 C1315 983 1347 950 1347 910 C1347 890 1330 879 1312 879 C1295 879 1282 890 1272 902 C1262 914 1250 928 1234 933 C1252 936 1268 928 1280 915 C1290 904 1300 893 1312 893 C1325 893 1334 902 1334 914 C1334 945 1305 972 1271 972 C1235 972 1205 950 1194 912 Z" />
      </svg>
      <div className="absolute left-[258px] top-[850px] text-[46px] leading-[60px] text-[#6f93bb] opacity-90 whitespace-nowrap pointer-events-none font-['Open_Sans',sans-serif]">ZenTek Consultants</div>
      <div className="absolute left-[260px] top-[910px] text-[25.2px] leading-[36px] text-[#b3b3b3] opacity-90 whitespace-nowrap pointer-events-none font-['Open_Sans',sans-serif]">Balancing business and technology</div>
    </>
  )
}

function ExcelWindow() {
  return (
    <div className="flex-1 min-w-0 h-full flex flex-col relative font-['Open_Sans',sans-serif] overflow-hidden">
      <div className="h-[5px] bg-[#111] shrink-0" />
      <div className="h-[33px] bg-[#1d6a42] flex items-center text-[11.5px] text-[#a9cdb9] shrink-0">
        <span className="ml-[21px] w-[55px]">AutoSave</span>
        <div className="w-[36px] h-[17px] rounded-full border-2 border-white flex items-center pl-[3px] gap-[3px] text-[8px] text-white">
          <div className="w-[8px] h-[8px] rounded-full bg-white" />Off
        </div>
        <Ico size={20} className="ml-[12px] text-[#a9cdb9]"><path d="M4 3 H16 L18 5 V19 H4 Z M7 3 V8 H15 V3 M7 19 V12 H15 V19" /></Ico>
        <Ico size={18} className="ml-[12px] text-[#5f9a7c]"><path d="M4 8 H13 A5 5 0 0 1 13 18 H8 M4 8 L8 4 M4 8 L8 12" /></Ico>
        <ChevronDown className="w-[9px] h-[9px] text-[#5f9a7c]" />
        <Ico size={18} className="ml-[10px] text-[#5f9a7c]"><path d="M18 8 H9 A5 5 0 0 0 9 18 H14 M18 8 L14 4 M18 8 L14 12" /></Ico>
        <ChevronDown className="w-[9px] h-[9px] text-[#5f9a7c]" />
        <Minus className="ml-[15px] w-[10px] h-[10px]" />
        <span className="ml-[26px] w-[60px]">Quantit...</span>
        <ChevronDown className="w-[9px] h-[9px]" />
        <Search className="ml-[33px] w-[16px] h-[16px]" strokeWidth={1.4} />
        <span className="ml-[32px] w-[94px] whitespace-nowrap">James Coppinger</span>
        <div className="ml-[3px] w-[23px] h-[23px] rounded-full bg-[#6a3f2c] flex items-center justify-center text-[10px] text-[#e8d8cc]">JC</div>
        <Ico size={16} className="ml-[28px]"><rect x="3" y="4" width="16" height="14" /><path d="M3 8 H19 M11 8 V18" /></Ico>
        <Minus className="ml-[29px] w-[14px] h-[14px]" />
        <Square className="ml-[30px] w-[11px] h-[11px]" />
        <X className="ml-[32px] w-[14px] h-[14px]" />
      </div>
      <div className="h-[30px] bg-[#f3f3f3] flex items-center text-[12px] text-[#555] shrink-0 relative">
        {RIBBON_TABS.map(([label, width]) => (
          <div key={label} className={`${width} text-center whitespace-nowrap overflow-hidden relative shrink-0 ${label === 'Home' ? 'text-[#1d5f3c] font-semibold' : ''}`}>
            {label}
            {label === 'Home' && <div className="absolute left-[5px] right-[5px] bottom-0 h-[2px] bg-[#1d6a42]" />}
          </div>
        ))}
        <div className="ml-[17px] w-[26px] h-[24px] bg-white flex items-center justify-center shrink-0 text-[#666]">
          <Ico size={16}><path d="M4 18 V9 H11 M12 13 L18 6 M18 6 H13 M18 6 V11" /></Ico>
        </div>
        <div className="ml-[12px] w-[26px] h-[24px] bg-white flex items-center justify-center shrink-0 text-[#666]">
          <Ico size={16}><path d="M4 4 H18 V15 H10 L6 19 V15 H4 Z" /></Ico>
        </div>
      </div>
      <Ribbon />
      <div className="h-[85px] bg-[#e6e6e6] pt-[12px] flex items-start shrink-0 text-[12px] text-[#444]">
        <div className="ml-[5px] w-[175px] h-[23px] bg-white border border-[#d6d6d6] flex items-center px-[6px] justify-between shrink-0">
          A19
          <div className="w-0 h-0 border-l-[3px] border-l-transparent border-r-[3px] border-r-transparent border-t-[4px] border-t-[#555]" />
        </div>
        <span className="ml-[13px] w-[17px] text-center text-[#aaa] leading-[23px] shrink-0">⋮</span>
        <div className="w-[106px] h-[23px] bg-white border border-[#d6d6d6] flex items-center shrink-0 text-[#aaa]">
          <X className="ml-[10px] w-[13px] h-[13px]" />
          <svg className="ml-[16px]" width="14" height="14" viewBox="0 0 14 14" fill="none" stroke="#aaa" strokeWidth="1.5"><path d="M2 7 L6 11 L12 3" /></svg>
          <span className="ml-[16px] italic text-[#666] font-['Liberation_Serif',serif] text-[13px]">fx</span>
        </div>
        <div className="ml-[3px] w-[408px] h-[63px] bg-white border border-[#d6d6d6] relative pl-[9px] pt-[1px] shrink-0">
          4" 45 Deg. Duct
          <ChevronUp className="absolute right-[2px] top-[2px] w-[12px] h-[12px] text-[#555]" />
        </div>
      </div>
      <Sheet />
      <div className="h-[25px] bg-[#e6e6e6] flex items-center shrink-0 text-[#999] border-t border-[#cfcfcf]">
        <span className="ml-[27px] text-[12px]">‹</span>
        <span className="ml-[22px] text-[12px]">›</span>
        <div className="ml-[38px] w-[61px] h-[25px] bg-white text-[12px] font-bold text-[#1d6a42] text-center leading-[24px] border-b-2 border-[#1d6a42] shrink-0 relative z-10">Sheet1</div>
        <div className="ml-[32px] w-[17px] h-[17px] rounded-full border border-[#777] flex items-center justify-center text-[#777] text-[13px] leading-none shrink-0">+</div>
        <span className="ml-[232px] text-[#aaa] text-[11px]">⋮</span>
        <div className="ml-[12px] w-[15px] h-[17px] bg-white border border-[#ccc] text-[9px] text-[#444] text-center leading-[15px] shrink-0">◂</div>
        <div className="w-[140px] h-[17px] bg-white shrink-0" />
        <div className="w-[87px] h-[17px] bg-[#d4d4d4] shrink-0" />
        <div className="w-[15px] h-[17px] bg-white border border-[#ccc] text-[9px] text-[#444] text-center leading-[15px] shrink-0">▸</div>
      </div>
      <div className="h-[21px] bg-[#e6e6e6] flex items-center text-[10.5px] text-[#444] shrink-0 border-t border-[#d2d2d2]">
        <span className="ml-[7px] w-[52px]">Ready</span>
        <Ico size={15} className="text-[#555] shrink-0"><rect x="4" y="3" width="14" height="16" /><circle cx="11" cy="13" r="3" /></Ico>
        <span className="ml-[92px] w-[120px] whitespace-nowrap">Average: 1913.083333</span>
        <span className="w-[58px] whitespace-nowrap">Count: 5</span>
        <span className="w-[83px] whitespace-nowrap">Sum: 5739.25</span>
        <div className="w-[35px] h-full bg-[#cfcfcf] flex items-center justify-center shrink-0">
          <Ico size={15}><path d="M3 3 H19 V19 H3 Z M3 8 H19 M3 13 H19 M8 3 V19 M14 3 V19" /></Ico>
        </div>
        <Ico size={15} className="ml-[15px] shrink-0 text-[#555]"><rect x="4" y="3" width="14" height="16" /><rect x="8" y="7" width="6" height="8" /></Ico>
        <Ico size={15} className="ml-[24px] shrink-0 text-[#555]"><rect x="3" y="3" width="16" height="16" /><path d="M8 3 V11 H14 V3" /></Ico>
        <span className="ml-[14px] text-[#777]">−</span>
        <div className="ml-[5px] w-[96px] h-[1px] bg-[#999] relative shrink-0">
          <div className="absolute left-[47px] -top-[6px] w-[4px] h-[13px] bg-[#555]" />
        </div>
        <span className="ml-[5px] text-[#777]">+</span>
        <span className="ml-[10px]">100%</span>
      </div>
      <div className="h-[2px] bg-[#222] shrink-0" />
      <ZenTekLogo />
      <svg className="absolute left-[302px] top-[528px] pointer-events-none" width="14" height="20" viewBox="0 0 14 20">
        <path d="M2 1 V15 L5.5 12 L8 18 L10.5 17 L8 11 H12.5 Z" fill="#fff" stroke="#333" />
      </svg>
    </div>
  )
}

export default function App() {
  return (
    <div className="w-[1854px] h-[1010px] flex overflow-hidden bg-black">
      <RevuWindow />
      <div className="w-[3px] bg-[#111] shrink-0" />
      <ExcelWindow />
    </div>
  )
}
